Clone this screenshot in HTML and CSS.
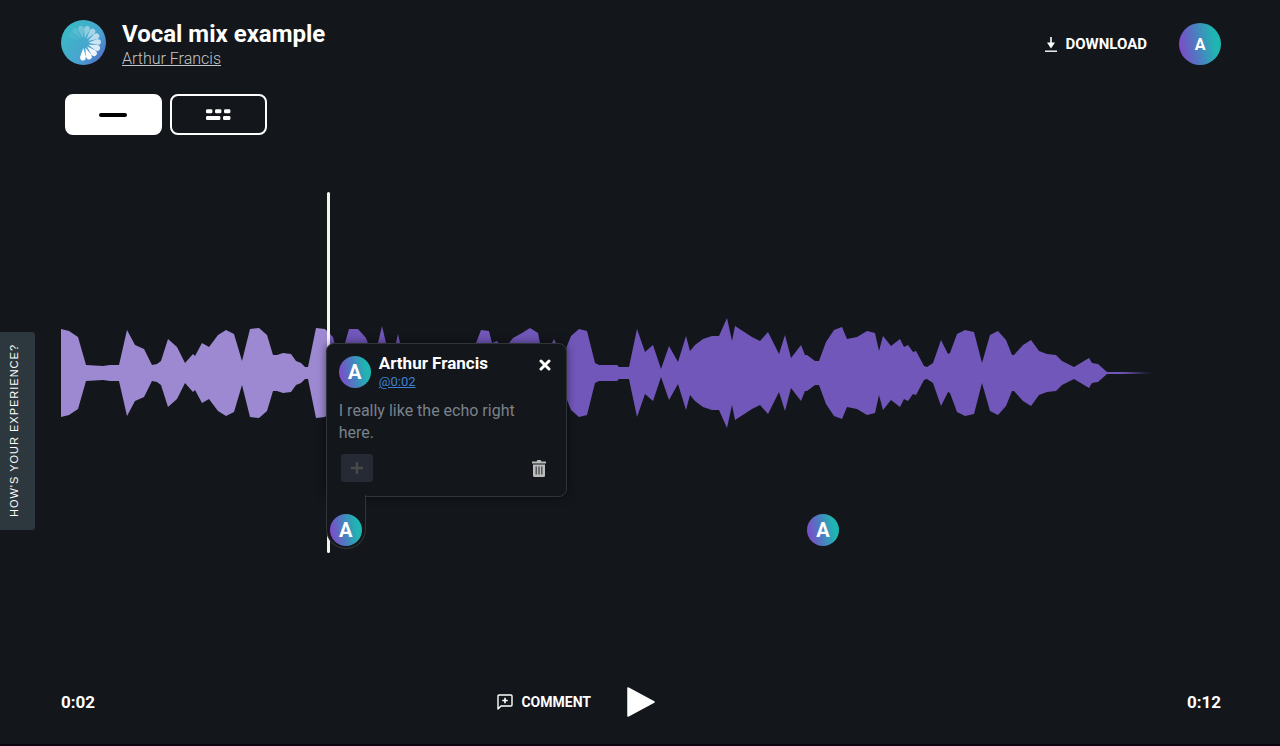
FILE: index.html
```
<!DOCTYPE html>
<html lang="en">
<head>
    <meta charset="UTF-8">
    <meta name="viewport" content="width=device-width, initial-scale=1.0">
    <title>Vocal mix example</title>
    <link rel="stylesheet" href="styles.css">
</head>
<body>
    <header class="header">
        <svg class="logo" viewBox="0 0 45 45" aria-hidden="true">
            <defs>
                <linearGradient id="logo-bg" x1="0.1" y1="0.2" x2="1" y2="0.9">
                    <stop offset="0" stop-color="#39b9c6"/>
                    <stop offset="0.6" stop-color="#4aa3d0"/>
                    <stop offset="1" stop-color="#5064c8"/>
                </linearGradient>
                <path id="petal" d="M0 -5 L-2.8 -13.5 Q-3.2 -17.5 0 -17.5 Q3.2 -17.5 2.8 -13.5 Z"/>
            </defs>
            <circle cx="22.5" cy="22.5" r="22.5" fill="url(#logo-bg)"/>
            <g transform="translate(22.5 23)" fill="#fff">
                <use href="#petal" transform="rotate(-58)" opacity="0.05"/>
                <use href="#petal" transform="rotate(-34)" opacity="0.12"/>
                <use href="#petal" transform="rotate(-10)" opacity="0.25"/>
                <use href="#petal" transform="rotate(14)" opacity="0.4"/>
                <use href="#petal" transform="rotate(38)" opacity="0.5"/>
                <use href="#petal" transform="rotate(62)" opacity="0.62"/>
                <use href="#petal" transform="rotate(86)" opacity="0.72"/>
                <use href="#petal" transform="rotate(110)" opacity="0.82"/>
                <use href="#petal" transform="rotate(134)" opacity="0.92"/>
                <use href="#petal" transform="rotate(158)"/>
                <use href="#petal" transform="rotate(182)"/>
            </g>
        </svg>
        <div class="track">
            <h1>Vocal mix example</h1>
            <a href="#">Arthur Francis</a>
        </div>
        <button class="text-button download">
            <svg width="14" height="18" viewBox="0 0 14 18" aria-hidden="true">
                <path d="M7 2V10" stroke="#fff" stroke-width="1.6"/>
                <path d="M3 7.5H11L7 13.5Z" fill="#fff"/>
                <path d="M1 16.2H13" stroke="#fff" stroke-width="1.4"/>
            </svg>
            DOWNLOAD
        </button>
        <button class="avatar large">A</button>
    </header>

    <nav class="views">
        <button class="view active" aria-label="Single track">
            <svg width="30" height="16" viewBox="0 0 30 16"><path d="M3 8H27" stroke="#000" stroke-width="4" stroke-linecap="round"/></svg>
        </button>
        <button class="view" aria-label="Versions">
            <svg width="30" height="16" viewBox="0 0 30 16" fill="#fff">
                <rect x="3" y="2.2" width="6.4" height="4" rx="1.3"/>
                <rect x="12" y="2.2" width="6.4" height="4" rx="1.3"/>
                <rect x="21" y="2.2" width="6.4" height="4" rx="1.3"/>
                <rect x="3" y="9" width="14.4" height="4" rx="1.3"/>
                <rect x="20" y="9" width="7.4" height="4" rx="1.3"/>
            </svg>
        </button>
    </nav>

    <main class="stage">
        <svg class="waveform" viewBox="0 -56 1160 112" preserveAspectRatio="none" aria-hidden="true">
            <defs>
                <linearGradient id="progress" gradientUnits="userSpaceOnUse" x1="0" y1="0" x2="1160" y2="0">
                    <stop offset="0.23" stop-color="#9d89d2"/>
                    <stop offset="0.23" stop-color="#7157b9"/>
                    <stop offset="0.91" stop-color="#7157b9"/>
                    <stop offset="0.94" stop-color="#7157b9" stop-opacity="0.2"/>
                </linearGradient>
                <path id="half" d="M0 1 L0 -44 8 -42 17 -36 25 -8 42 -7 49 -8 58 -8 66 -43 74 -28 83 -24 91 -8 96 -9 100 -12 107 -34 116 -26 124 -10 132 -19 134 -17 141 -30 148 -26 157 -38 165 -43 173 -39 181 -12 189 -44 198 -45 206 -38 212 -18 216 -18 222 -20 230 -19 235 -12 240 -10 244 -6 247 -6 255 -45 264 -44 272 -36 278 -12
                    284 -30 288 -44 297 -44 305 -35 312 -16 317 -30 321 -47 325 -30 330 -16 335 -30 337 -39 339 -30 350 -8 400 -8 415 -30 420 -43 428 -42 431 -30 436 -32 442 -24 448 -30 452 -35 461 -40 469 -45 477 -40 479 -30 485 -16 491 -30 493 -34 496 -28 502 -12
                    506 -27 510 -37 518 -44 526 -42 534 -10 538 -8 556 -8 558 -6 568 -6 576 -44 584 -21 592 -28 600 -4 608 -27 617 -11 625 -37 629 -22 634 -28 642 -34 651 -37 658 -37 666 -55 671 -32 674 -47 691 -36 699 -32 707 -41 718 -19 724 -38 730 -15 740 -28 744 -18 746 -18 754 -12 758 -12 765 -31 773 -43 781 -46 786 -34
                    796 -36 806 -42 814 -40 818 -22 822 -37 830 -27 839 -34 843 -26 847 -28 852 -21 855 -22 863 -7 866 -6 872 -10 880 -33 887 -19 889 -20 896 -39 904 -43 913 -41 921 -10 929 -38 937 -42 945 -33 951 -18 953 -18 962 -28 970 -33 978 -22 986 -19 995 -18 1001 -12 1013 -6 1028 -15 1031 -10 1037 -9 1046 -1 1062 -1 1095 0 1046 1 Z"/>
            </defs>
            <use href="#half" fill="url(#progress)"/>
            <use href="#half" fill="url(#progress)" transform="scale(1 -1)"/>
        </svg>
        <div class="playhead"></div>
        <button class="avatar pin second">A</button>

        <article class="comment">
            <div class="comment-head">
                <span class="avatar">A</span>
                <div class="author">
                    <h2>Arthur Francis</h2>
                    <a href="#">@0:02</a>
                </div>
                <button class="icon-button close" aria-label="Close">
                    <svg width="12" height="12" viewBox="0 0 12 12"><path d="M2 2L10 10M10 2L2 10" stroke="#fff" stroke-width="3" stroke-linecap="round"/></svg>
                </button>
            </div>
            <p>I really like the echo right here.</p>
            <div class="comment-actions">
                <button class="add" aria-label="Add reaction">
                    <svg width="14" height="14" viewBox="0 0 14 14"><path d="M7 1V13M1 7H13" stroke="#484949" stroke-width="2.4"/></svg>
                </button>
                <button class="icon-button" aria-label="Delete">
                    <svg width="14" height="17" viewBox="0 0 14 17">
                        <path d="M0 1.5H4.5L5.5 0H8.5L9.5 1.5H14V3.5H0Z" fill="#bcbcbc"/>
                        <path d="M1 4.5H13V15.5Q13 17 11.5 17H2.5Q1 17 1 15.5Z" fill="#bcbcbc"/>
                        <path d="M4.2 6.5V14.5M7 6.5V14.5M9.8 6.5V14.5" stroke="#3a3d40" stroke-width="1.2"/>
                    </svg>
                </button>
            </div>
            <div class="tail"><button class="avatar">A</button></div>
        </article>
    </main>

    <footer class="player">
        <div class="player-left">
            <span>0:02</span>
            <button class="text-button add-comment">
                <svg width="16" height="16" viewBox="0 0 16 16" fill="none" stroke="#fff" stroke-width="1.4" aria-hidden="true">
                    <path d="M1 15V2Q1 1 2 1H14Q15 1 15 2V11Q15 12 14 12H4Z" stroke-linejoin="round"/>
                    <path d="M8 3.8V9.2M5.3 6.5H10.7" stroke-width="1.6"/>
                </svg>
                COMMENT
            </button>
        </div>
        <button class="icon-button" aria-label="Play">
            <svg width="28" height="30" viewBox="0 0 28 30"><path d="M1 1L27 15L1 29Z" fill="#fff" stroke="#fff" stroke-width="1.5" stroke-linejoin="round"/></svg>
        </button>
        <span class="duration">0:12</span>
    </footer>

    <button class="feedback">HOW'S YOUR EXPERIENCE?</button>
</body>
</html>
```
FILE: styles.css
```
* {
    box-sizing: border-box;
}

body {
    display: flex;
    flex-direction: column;
    min-height: 100vh;
    margin: 0;
    padding: 20px 59px 0 61px;
    border-bottom: 2px solid #0b0610;
    background-color: #13161b;
    color: #fff;
    font-family: Roboto, "Liberation Sans", sans-serif;
}

h1, h2, p {
    margin: 0;
}

button {
    padding: 0;
    border: none;
    background: none;
    color: inherit;
    font-family: inherit;
    cursor: pointer;
}

svg {
    display: block;
}

.header {
    display: flex;
    align-items: center;
    height: 48px;
}

.logo {
    align-self: flex-start;
    width: 45px;
    height: 45px;
    margin-right: 16px;
}

.track {
    padding-top: 2px;
}

.track h1 {
    font-size: 24px;
    line-height: 28px;
    font-weight: 700;
}

.track a {
    display: block;
    color: #c4c5c7;
    font-size: 16px;
    line-height: 22px;
    font-weight: 300;
}

.text-button {
    display: flex;
    align-items: center;
    gap: 8px;
    font-size: 15px;
    font-weight: 700;
}

.text-button.add-comment {
    font-size: 14px;
}

.download {
    margin-left: auto;
    margin-right: 32px;
}

.avatar {
    display: flex;
    align-items: center;
    justify-content: center;
    width: 32px;
    height: 32px;
    border-radius: 50%;
    background: linear-gradient(80deg, #8048c8 5%, #4b7fc0 45%, #1fb5b2 80%);
    color: #fff;
    font-size: 20px;
    font-weight: 700;
}

.avatar.large {
    width: 42px;
    height: 42px;
    font-size: 16px;
}

.views {
    display: flex;
    gap: 8px;
    margin: 26px 4px 0;
}

.view {
    display: flex;
    align-items: center;
    justify-content: center;
    width: 97px;
    height: 41px;
    padding-right: 1px;
    border: 2px solid #fff;
    border-radius: 8px;
}

.view.active {
    background-color: #fff;
}

.stage {
    position: relative;
    display: flex;
    align-items: center;
    height: 361px;
    margin-top: 57px;
}

.waveform {
    width: 100%;
    height: 112px;
}

.playhead {
    position: absolute;
    top: 0;
    bottom: 0;
    left: calc(23% - 1px);
    width: 3px;
    border-radius: 2px;
    background-color: #f4f3f0;
}

.pin {
    position: absolute;
    bottom: 7px;
}

.pin.second {
    left: 64.3%;
}

.comment {
    position: absolute;
    top: 151px;
    left: calc(23% - 2px);
    width: 241px;
    height: 154px;
    padding: 9px 15px 13px 12px;
    border: 1px solid #30353a;
    border-radius: 8px 8px 8px 0;
    background-color: #13161b;
    box-shadow: 0 0 8px rgba(0, 0, 0, 0.5);
}

.comment-head {
    display: flex;
    gap: 8px;
    align-items: center;
}

.author h2 {
    font-size: 17px;
    line-height: 20px;
    font-weight: 700;
}

.author a {
    display: block;
    color: #4080d4;
    font-size: 13px;
    line-height: 18px;
}

.close {
    align-self: flex-start;
    margin-top: 6px;
    margin-left: auto;
}

.comment p {
    margin-top: 9px;
    color: #7a828b;
    font-size: 16px;
    line-height: 22px;
}

.comment-actions {
    display: flex;
    align-items: center;
    justify-content: space-between;
    margin-top: 10px;
    padding: 0 5px 0 2px;
}

.add {
    display: flex;
    align-items: center;
    justify-content: center;
    width: 32px;
    height: 28px;
    border-radius: 3px;
    background-color: #252a34;
}

.tail {
    position: absolute;
    top: 151px;
    left: -1px;
    width: 40px;
    height: 54px;
    padding: 19px 3px 0;
    border: 1px solid #30353a;
    border-top: none;
    border-radius: 0 0 20px 20px;
    background-color: #13161b;
}

.player {
    display: grid;
    grid-template-columns: 1fr auto 1fr;
    align-items: center;
    margin-top: auto;
    padding-bottom: 27px;
    font-size: 17px;
    font-weight: 700;
}

.player-left {
    display: flex;
    align-items: center;
    justify-content: space-between;
    padding-right: 36px;
}

.duration {
    text-align: right;
}

/* tab fixed to the left edge of the window */
.feedback {
    position: absolute;
    top: 332px;
    left: 0;
    width: 35px;
    height: 198px;
    padding-right: 8px;
    border-radius: 0 3px 3px 0;
    background-color: #2d383e;
    font-family: "Liberation Sans", sans-serif;
    font-size: 11px;
    letter-spacing: 1px;
    writing-mode: sideways-lr;
}
```
